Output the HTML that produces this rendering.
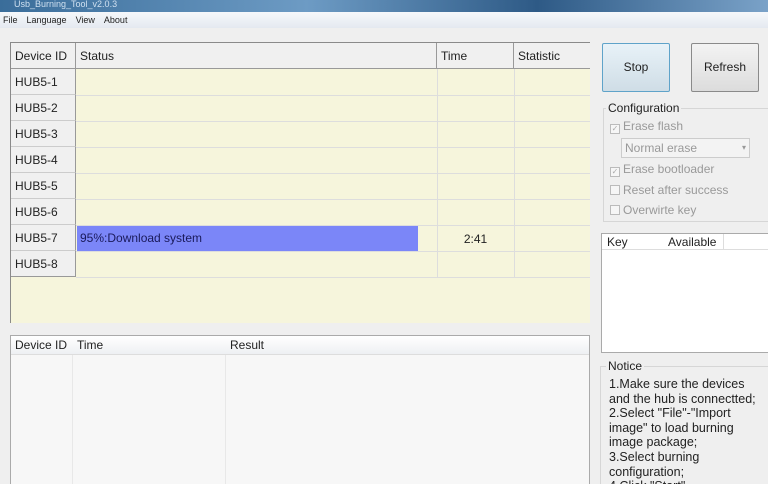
<!DOCTYPE html>
<html style="overflow:hidden;width:768px;height:484px"><head><style>
*{margin:0;padding:0;box-sizing:border-box}
body{width:768px;height:484px;overflow:hidden;background:#efefef;font-family:"Liberation Sans",sans-serif;font-size:12px;color:#222;position:relative}
.a{position:absolute}
.title{left:0;top:0;width:768px;height:12px;background:linear-gradient(90deg,#3a6d9a,#6d9bc4 40%,#2e5a86 70%,#7aa2c8);color:#cfe0f0;font-size:9px;padding-left:14px;line-height:9px;overflow:hidden}
.menu{left:0;top:12px;width:768px;height:16px;background:linear-gradient(#f6f8fb,#e4e9f0);font-size:9px;line-height:16px;padding-left:3px}
.menu span{margin-right:9px}
.t1{left:10px;top:42px;width:580px;height:281px;background:#f6f5dc;border:1px solid #8a8a8a;border-bottom:none;border-right:none;overflow:hidden}
.cell{position:absolute;border-right:1px solid #ddd;border-bottom:1px solid #ddd;white-space:nowrap}
.hdr{background:#f0f0f0;border-right:1px solid #999;border-bottom:1px solid #999;padding:6px 4px;font-size:12px}
.rid{background:#f0f0f0;border-right:1px solid #999;border-bottom:1px solid #ccc;padding:6px 4px}
.btn{border:1px solid #8a8a8a;border-radius:2px;background:linear-gradient(#f3f3f3,#dcdcdc);text-align:center;line-height:47px;font-size:12px}
.chk{color:#999;font-size:12px;white-space:nowrap}
.box{display:inline-block;width:10px;height:10px;border:1px solid #bbb;background:#f6f6f6;vertical-align:-1px;margin-right:3px;font-size:8px;line-height:8px;text-align:center;color:#aaa}
</style></head><body>
<div class="a title">Usb_Burning_Tool_v2.0.3</div>
<div class="a menu"><span>File</span><span>Language</span><span>View</span><span>About</span></div>

<div class="a t1">
 <div class="cell hdr" style="left:0;top:0;width:65px;height:26px">Device ID</div>
 <div class="cell hdr" style="left:65px;top:0;width:361px;height:26px">Status</div>
 <div class="cell hdr" style="left:426px;top:0;width:77px;height:26px">Time</div>
 <div class="cell hdr" style="left:503px;top:0;width:77px;height:26px">Statistic</div>
 <div class="cell rid" style="left:0;top:26px;width:65px;height:26px">HUB5-1</div>
 <div class="cell rid" style="left:0;top:52px;width:65px;height:26px">HUB5-2</div>
 <div class="cell rid" style="left:0;top:78px;width:65px;height:26px">HUB5-3</div>
 <div class="cell rid" style="left:0;top:104px;width:65px;height:26px">HUB5-4</div>
 <div class="cell rid" style="left:0;top:130px;width:65px;height:26px">HUB5-5</div>
 <div class="cell rid" style="left:0;top:156px;width:65px;height:26px">HUB5-6</div>
 <div class="cell rid" style="left:0;top:182px;width:65px;height:26px">HUB5-7</div>
 <div class="cell rid" style="left:0;top:208px;width:65px;height:26px;border-bottom-color:#999">HUB5-8</div>
 <div class="a" style="left:65px;top:52px;width:515px;height:1px;background:#ddd"></div>
 <div class="a" style="left:65px;top:78px;width:515px;height:1px;background:#ddd"></div>
 <div class="a" style="left:65px;top:104px;width:515px;height:1px;background:#ddd"></div>
 <div class="a" style="left:65px;top:130px;width:515px;height:1px;background:#ddd"></div>
 <div class="a" style="left:65px;top:156px;width:515px;height:1px;background:#ddd"></div>
 <div class="a" style="left:65px;top:182px;width:515px;height:1px;background:#ddd"></div>
 <div class="a" style="left:65px;top:208px;width:515px;height:1px;background:#ddd"></div>
 <div class="a" style="left:65px;top:234px;width:515px;height:1px;background:#ddd"></div>
 <div class="a" style="left:426px;top:26px;width:1px;height:208px;background:#ddd"></div>
 <div class="a" style="left:503px;top:26px;width:1px;height:208px;background:#ddd"></div>
 <div class="a" style="left:66px;top:183px;width:341px;height:25px;background:#7b86f8;padding:5px 3px;color:#1a1a5a">95%:Download system</div>
 <div class="a" style="left:426px;top:189px;width:77px;text-align:center">2:41</div>
</div>

<div class="a" style="left:10px;top:335px;width:580px;height:149px;background:#f7f7f7;border:1px solid #aaa;border-bottom:none">
 <div class="a" style="left:0;top:0;width:578px;height:19px;background:linear-gradient(#fff,#eef0f3);border-bottom:1px solid #ddd;line-height:19px">
  <span class="a" style="left:4px">Device ID</span><span class="a" style="left:66px">Time</span><span class="a" style="left:219px">Result</span></div>
 <div class="a" style="left:61px;top:19px;width:1px;height:130px;background:#e8e8e8"></div>
 <div class="a" style="left:214px;top:19px;width:1px;height:130px;background:#e8e8e8"></div>
</div>

<div class="a btn" style="left:602px;top:43px;width:68px;height:49px;border-color:#5fa3c9;background:linear-gradient(#e8f2f8,#cfdde6)">Stop</div>
<div class="a btn" style="left:691px;top:43px;width:68px;height:49px">Refresh</div>

<div class="a" style="left:603px;top:108px;width:170px;height:114px;border:1px solid #d6d6d6;border-right:none"></div>
<div class="a" style="left:606px;top:101px;background:#efefef;padding:0 2px">Configuration</div>
<div class="a chk" style="left:610px;top:119px"><span class="box">✓</span>Erase flash</div>
<div class="a" style="left:621px;top:138px;width:129px;height:20px;border:1px solid #ccc;background:#f3f3f3;color:#999;padding:2px 3px">Normal erase<span style="float:right;font-size:8px;line-height:14px">▾</span></div>
<div class="a chk" style="left:610px;top:162px"><span class="box">✓</span>Erase bootloader</div>
<div class="a chk" style="left:610px;top:183px"><span class="box"></span>Reset after success</div>
<div class="a chk" style="left:610px;top:203px"><span class="box"></span>Overwirte key</div>

<div class="a" style="left:601px;top:233px;width:170px;height:120px;background:#fff;border:1px solid #aaa">
 <div style="height:16px;border-bottom:1px solid #ddd;line-height:16px;position:relative"><span class="a" style="left:5px">Key</span><span class="a" style="left:66px">Available</span><span class="a" style="left:121px;top:0;width:1px;height:16px;background:#ddd"></span></div>
</div>

<div class="a" style="left:600px;top:366px;width:170px;height:120px;border:1px solid #d6d6d6;border-right:none"></div>
<div class="a" style="left:606px;top:359px;background:#efefef;padding:0 2px">Notice</div>
<div class="a" style="left:609px;top:377px;width:148px;line-height:14.6px;font-size:12.5px">1.Make sure the devices and the hub is connectted;<br>2.Select "File"-"Import image" to load burning image package;<br>3.Select burning configuration;<br>4.Click "Start"</div>
</body></html>
